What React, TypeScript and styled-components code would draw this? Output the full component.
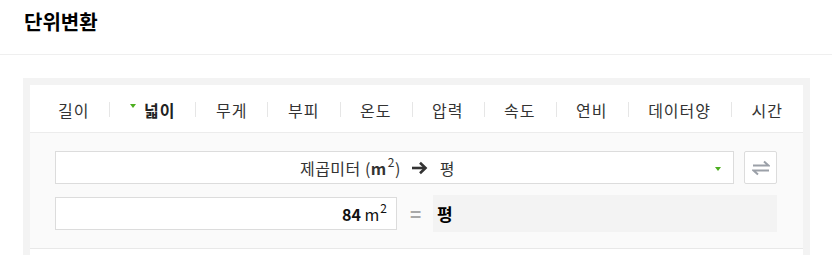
import React from 'react';
import styled, { createGlobalStyle } from 'styled-components';

const GlobalStyle = createGlobalStyle`
  html, body {
    margin: 0;
    padding: 0;
    background: #fff;
    font-family: 'Noto Sans CJK KR', 'Noto Sans', sans-serif;
    color: #333;
  }
  * { box-sizing: border-box; }
`;

const Header = styled.div`
  height: 55px;
  padding: 8px 24px 0;
  border-bottom: 1px solid #efefef;
  font-size: 20px;
  font-weight: 700;
  line-height: 28px;
  color: #000;
`;

const Frame = styled.div`
  margin: 23px 0 0 23px;
  width: 787px;
  padding: 7px 7px 0;
  background: #f3f3f3;
`;

const Inner = styled.div`
  background: #fff;
  padding-bottom: 10px;
`;

const Tabs = styled.ul`
  display: flex;
  align-items: center;
  height: 48px;
  margin: 0;
  padding: 0 0 0 8px;
  list-style: none;
  border-bottom: 1px solid #ececec;
`;

const Tab = styled.li<{ $active?: boolean }>`
  display: flex;
  align-items: center;
  padding: 2px 20px 0 20px;
  font-size: 16px;
  letter-spacing: 1px;
  line-height: 20px;
  font-weight: ${(p) => (p.$active ? 700 : 400)};
  color: ${(p) => (p.$active ? '#222' : '#333')};
  white-space: nowrap;
`;

const Separator = styled.li`
  width: 1px;
  height: 15px;
  background: #e6e6e6;
  margin-top: 2px;
`;

const Caret = styled.span<{ $gap?: number }>`
  display: inline-block;
  width: 0;
  height: 0;
  border-left: 3px solid transparent;
  border-right: 3px solid transparent;
  border-top: 4px solid #4cae1f;
  margin-right: ${(p) => p.$gap ?? 0}px;
  margin-bottom: 8px;
`;

const Content = styled.div`
  background: #fafafa;
  padding: 18px 26px 16px 25px;
  border-bottom: 1px solid #e8e8e8;
  display: flex;
  flex-direction: column;
  gap: 11px;
`;

const Row = styled.div`
  display: flex;
  align-items: center;
`;

const Select = styled.div`
  flex: 1;
  height: 33px;
  background: #fff;
  border: 1px solid #dcdcdc;
  display: flex;
  align-items: center;
  justify-content: center;
  padding-right: 34px;
  position: relative;
  font-size: 16px;
  letter-spacing: 0.5px;
  color: #333;
`;

const SelectCaret = styled.span`
  position: absolute;
  right: 12px;
  top: 15px;
  width: 0;
  height: 0;
  border-left: 3px solid transparent;
  border-right: 3px solid transparent;
  border-top: 4px solid #4cae1f;
`;

const ArrowWrap = styled.span`
  display: inline-flex;
  align-items: center;
  margin: 0 12px 0 10px;
`;

const Sup = styled.span`
  font-size: 12px;
  position: relative;
  top: -6px;
  margin-left: 1px;
`;

const SwapButton = styled.button`
  width: 33px;
  height: 33px;
  margin-left: 10px;
  padding: 0;
  background: #fff;
  border: 1px solid #dcdcdc;
  border-radius: 2px;
  display: flex;
  align-items: center;
  justify-content: center;
`;

const ValueInput = styled.div`
  width: 342px;
  height: 33px;
  background: #fff;
  border: 1px solid #dcdcdc;
  display: flex;
  align-items: center;
  justify-content: flex-end;
  padding-right: 9px;
  font-size: 16px;
  color: #111;
`;

const Equals = styled.span`
  width: 36px;
  text-align: center;
  font-size: 19px;
  font-weight: 700;
  color: #a8a8a8;
  padding-left: 1px;
`;

const Result = styled.div`
  flex: 1;
  height: 37px;
  background: #f3f3f3;
  display: flex;
  align-items: center;
  padding-left: 4px;
  font-size: 17px;
  font-weight: 700;
  color: #000;
`;

const tabs = ['길이', '넓이', '무게', '부피', '온도', '압력', '속도', '연비', '데이터양', '시간'];

const SwapIcon: React.FC = () => (
  <svg width="18" height="16" viewBox="0 0 18 16" fill="none">
    <path d="M1 5.5H16.5L12 1.5" stroke="#9ba0a8" strokeWidth="2" />
    <path d="M17 10.5H1.5L6 14.5" stroke="#9ba0a8" strokeWidth="2" />
  </svg>
);

const ArrowIcon: React.FC = () => (
  <svg width="17" height="14" viewBox="0 0 17 14" fill="none">
    <path d="M1 7H14" stroke="#333" strokeWidth="2.6" />
    <path d="M9 1.8L14.5 7L9 12.2" stroke="#333" strokeWidth="2.6" />
  </svg>
);

const App: React.FC = () => {
  return (
    <>
      <GlobalStyle />
      <Header>단위변환</Header>
      <Frame>
        <Inner>
          <Tabs>
            {tabs.map((name, i) => (
              <React.Fragment key={name}>
                {i > 0 && <Separator />}
                <Tab $active={name === '넓이'}>
                  {name === '넓이' && <Caret $gap={8} />}
                  {name}
                </Tab>
              </React.Fragment>
            ))}
          </Tabs>
          <Content>
            <Row>
              <Select>
                제곱미터 (<b>m</b>
                <Sup>2</Sup>)
                <ArrowWrap>
                  <ArrowIcon />
                </ArrowWrap>
                평
                <SelectCaret />
              </Select>
              <SwapButton aria-label="swap">
                <SwapIcon />
              </SwapButton>
            </Row>
            <Row>
              <ValueInput>
                <b>84</b>&nbsp;m<Sup>2</Sup>
              </ValueInput>
              <Equals>=</Equals>
              <Result>평</Result>
            </Row>
          </Content>
        </Inner>
      </Frame>
    </>
  );
};

export default App;
